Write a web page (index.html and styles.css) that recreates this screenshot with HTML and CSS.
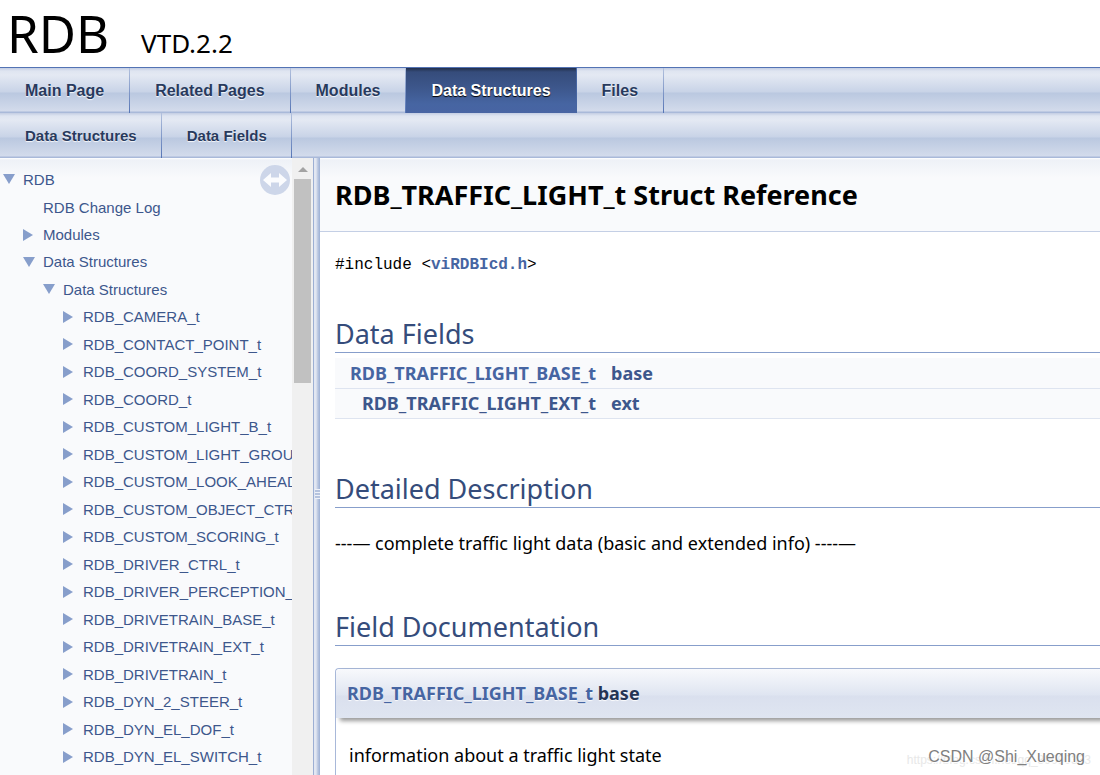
FILE: index.html
```html
<!DOCTYPE html>
<html lang="en">
<head>
<meta charset="utf-8">
<title>RDB: RDB_TRAFFIC_LIGHT_t Struct Reference</title>
<link rel="stylesheet" href="styles.css">
</head>
<body>
<svg class="defs" aria-hidden="true">
  <symbol id="open" viewBox="0 0 12 10"><path d="M0 0H12L6 10Z" fill="#879ecb"/></symbol>
  <symbol id="closed" viewBox="0 0 10 12"><path d="M0 0L10 6L0 12Z" fill="#879ecb"/></symbol>
</svg>
<header class="title-area">
  <span class="project">RDB</span>
  <span class="version">VTD.2.2</span>
</header>
<nav class="tabs" aria-label="Main">
  <a href="#">Main Page</a>
  <a href="#">Related Pages</a>
  <a href="#">Modules</a>
  <a href="#" class="current">Data Structures</a>
  <a href="#">Files</a>
</nav>
<nav class="tabs tabs-sub" aria-label="Data structures">
  <a href="#">Data Structures</a>
  <a href="#">Data Fields</a>
</nav>
<div class="frame">
  <aside class="side">
    <div class="tree-wrap">
      <ul class="tree">
        <li class="l0"><button aria-label="Collapse"><svg class="down"><use href="#open"/></svg></button><a href="#">RDB</a></li>
        <li class="l1"><span class="spacer"></span><a href="#">RDB Change Log</a></li>
        <li class="l1"><button aria-label="Expand"><svg class="right"><use href="#closed"/></svg></button><a href="#">Modules</a></li>
        <li class="l1"><button aria-label="Collapse"><svg class="down"><use href="#open"/></svg></button><a href="#">Data Structures</a></li>
        <li class="l2"><button aria-label="Collapse"><svg class="down"><use href="#open"/></svg></button><a href="#">Data Structures</a></li>
      </ul>
      <ul class="tree tree-structs">
        <li><button aria-label="Expand"><svg class="right"><use href="#closed"/></svg></button><a href="#">RDB_CAMERA_t</a></li>
        <li><button aria-label="Expand"><svg class="right"><use href="#closed"/></svg></button><a href="#">RDB_CONTACT_POINT_t</a></li>
        <li><button aria-label="Expand"><svg class="right"><use href="#closed"/></svg></button><a href="#">RDB_COORD_SYSTEM_t</a></li>
        <li><button aria-label="Expand"><svg class="right"><use href="#closed"/></svg></button><a href="#">RDB_COORD_t</a></li>
        <li><button aria-label="Expand"><svg class="right"><use href="#closed"/></svg></button><a href="#">RDB_CUSTOM_LIGHT_B_t</a></li>
        <li><button aria-label="Expand"><svg class="right"><use href="#closed"/></svg></button><a href="#">RDB_CUSTOM_LIGHT_GROUP_B_t</a></li>
        <li><button aria-label="Expand"><svg class="right"><use href="#closed"/></svg></button><a href="#">RDB_CUSTOM_LOOK_AHEAD_t</a></li>
        <li><button aria-label="Expand"><svg class="right"><use href="#closed"/></svg></button><a href="#">RDB_CUSTOM_OBJECT_CTRL_t</a></li>
        <li><button aria-label="Expand"><svg class="right"><use href="#closed"/></svg></button><a href="#">RDB_CUSTOM_SCORING_t</a></li>
        <li><button aria-label="Expand"><svg class="right"><use href="#closed"/></svg></button><a href="#">RDB_DRIVER_CTRL_t</a></li>
        <li><button aria-label="Expand"><svg class="right"><use href="#closed"/></svg></button><a href="#">RDB_DRIVER_PERCEPTION_t</a></li>
        <li><button aria-label="Expand"><svg class="right"><use href="#closed"/></svg></button><a href="#">RDB_DRIVETRAIN_BASE_t</a></li>
        <li><button aria-label="Expand"><svg class="right"><use href="#closed"/></svg></button><a href="#">RDB_DRIVETRAIN_EXT_t</a></li>
        <li><button aria-label="Expand"><svg class="right"><use href="#closed"/></svg></button><a href="#">RDB_DRIVETRAIN_t</a></li>
        <li><button aria-label="Expand"><svg class="right"><use href="#closed"/></svg></button><a href="#">RDB_DYN_2_STEER_t</a></li>
        <li><button aria-label="Expand"><svg class="right"><use href="#closed"/></svg></button><a href="#">RDB_DYN_EL_DOF_t</a></li>
        <li><button aria-label="Expand"><svg class="right"><use href="#closed"/></svg></button><a href="#">RDB_DYN_EL_SWITCH_t</a></li>
      </ul>
      <button class="sync" aria-label="Toggle panel synchronisation">
        <svg viewBox="0 0 30 30"><circle cx="15" cy="15" r="15" fill="#cdd6e9"/><path d="M3 15L11 8V12.500H19V8L27 15L19 22V17.500H11V22Z" fill="#fbfcfe"/></svg>
      </button>
    </div>
    <div class="scrollbar" aria-hidden="true">
      <svg class="arrow" viewBox="0 0 10 5"><path d="M0 5L5 0L10 5Z" fill="#a3a3a3"/></svg>
      <div class="thumb"></div>
    </div>
    <div class="splitter"><span class="grip"></span></div>
  </aside>
  <main class="doc">
    <div class="doc-header"><h1>RDB_TRAFFIC_LIGHT_t Struct Reference</h1></div>
    <div class="contents">
      <p class="include"><code>#include &lt;<a href="#">viRDBIcd.h</a>&gt;</code></p>
      <h2>Data Fields</h2>
      <table class="members">
        <tr><td class="type"><a href="#">RDB_TRAFFIC_LIGHT_BASE_t</a></td><td><a class="dark" href="#">base</a></td></tr>
        <tr><td class="type"><a class="dark" href="#">RDB_TRAFFIC_LIGHT_EXT_t</a></td><td><a class="dark" href="#">ext</a></td></tr>
      </table>
      <h2>Detailed Description</h2>
      <p class="detail">---&mdash; complete traffic light data (basic and extended info) ----&mdash;</p>
      <h2>Field Documentation</h2>
      <section class="member">
        <h3><a href="#">RDB_TRAFFIC_LIGHT_BASE_t</a> base</h3>
        <div class="member-doc"><p>information about a traffic light state</p></div>
      </section>
    </div>
  </main>
</div>
<div class="source-url">https://blog.csdn.net/qq_39090333</div>
<div class="credit">CSDN @Shi_Xueqing</div>
</body>
</html>
```
FILE: styles.css
```css
* { box-sizing: border-box; }
body {
  margin: 0;
  height: 100vh;
  overflow: hidden;
  display: flex;
  flex-direction: column;
  background: #fff;
  color: #000;
  font-family: "Noto Sans", "Open Sans", sans-serif;
  font-size: 18px;
}
a { color: #4665a2; text-decoration: none; }
h1, h2, h3, p, ul { margin: 0; padding: 0; }
button { border: 0; padding: 0; background: none; cursor: pointer; }
.defs { position: absolute; width: 0; height: 0; }

.title-area {
  display: flex;
  align-items: baseline;
  gap: 32px;
  height: 68px;
  padding-left: 7px;
  border-bottom: 1px solid #5373b4;
  line-height: 66px;
}
.project { font-size: 51px; }
.version { font-size: 26px; }

.tabs {
  display: flex;
  flex: none;
  height: 45px;
  background: linear-gradient(#c3cde3 0, #dfe5f1 3px, #e4e9f3 7px, #c8d3e7 24px, #bac8e0 25px, #d0d9ea 41px, #d3dbec 43px, #a9b9d9 44px);
  font: bold 16px/46px "Liberation Sans", Arial, sans-serif;
}
.tabs a {
  padding: 0 25px;
  border-right: 1px solid;
  border-image: linear-gradient(#b4c2de, #5373b4) 1;
  color: #283a5d;
  text-shadow: 0 1px 1px rgba(255, 255, 255, .9);
}
.tabs-sub { font-size: 15px; }
.tabs-sub a { padding-right: 24px; }
.tabs a.current {
  background: linear-gradient(#222f4b 0, #354c7b 4px, #3d578c 20px, #4665a2 36px, #4864a3);
  border-image: none;
  border-color: #4665a2;
  color: #fff;
  text-shadow: 0 1px 1px #000;
}

.frame { display: flex; flex: 1; min-height: 0; }
.side { display: flex; flex: none; width: 320px; background: #f9fafc; }
.tree-wrap {
  position: relative;
  flex: 1;
  overflow: hidden;
  padding-top: 7px;
  background: linear-gradient(#fff 0, #eef1f7 2px, #f9fafc 20px);
}
.tree {
  list-style: none;
  font: 15px "Liberation Sans", Arial, sans-serif;
  white-space: nowrap;
}
.tree li { display: flex; align-items: center; height: 27px; }
.tree li:nth-child(-n+2), .tree .l2 { height: 28px; }
.tree-structs li:nth-child(n) { height: 27px; padding-left: 60px; }
.tree-structs li:nth-child(even) { height: 28px; }
.tree a { color: #3d578c; }
.tree button, .spacer { flex: none; width: 19px; height: 20px; margin-right: 4px; }
.tree button { display: flex; align-items: center; padding-left: 3px; }
.l1, .l2 { padding-left: 20px; }
.tree .l2 { padding-left: 40px; }
.down { width: 12px; height: 10px; }
.right { width: 10px; height: 12px; }
.sync { position: absolute; top: 7px; right: 2px; width: 30px; height: 30px; }
.sync svg { display: block; width: 30px; height: 30px; }

.scrollbar { width: 21px; padding: 9px 2px 0; background: #f0f0f0; }
.arrow { display: block; width: 10px; height: 5px; margin: 0 auto 7px; }
.thumb { width: 17px; height: 204px; background: #c1c1c1; }
.splitter {
  display: flex;
  align-items: center;
  width: 7px;
  padding: 54px 0 0 2px;
  background: linear-gradient(90deg, #9cafd4 0 1px, #e2e7f2 1px 3px, #c9d3e7 4px, #b8c6e0 5px, #9cafd4);
}
.grip { width: 5px; height: 10px; background: repeating-linear-gradient(#eef1f8 0 1px, #b5c3de 1px 3px); }

.doc { flex: 1; min-width: 0; overflow: hidden; }
.doc-header {
  height: 74px;
  padding: 0 15px;
  border-bottom: 1px solid #c4cfe5;
  background: linear-gradient(#fff 0, #eef1f7 2px, #f9fafc 20px);
}
h1 { font-size: 27px; line-height: 74px; white-space: nowrap; }
.contents { padding-left: 15px; white-space: nowrap; }
.include { padding-top: 17px; line-height: 26px; }
.include code { font: 16px/26px "Liberation Mono", monospace; }
.include a { font-weight: bold; }
h2 {
  margin-top: 34px;
  height: 41px;
  border-bottom: 1px solid #879ecb;
  color: #354c7b;
  font-size: 27px;
  font-weight: normal;
  line-height: 44px;
}
.members { width: 100%; margin: 5px 0 48px; border-collapse: collapse; font-weight: bold; }
.members td { height: 30px; padding: 0 7px; border-bottom: 1px solid #dee4f0; background: #f9fafc; line-height: 28px; }
.members .type { width: 269px; padding-right: 8px; text-align: right; }
.dark { color: #3d578c; }
.detail { padding: 21px 0 14px; line-height: 28px; }
.member {
  margin-top: 22px;
  border: 1px solid #a8b8d9;
  border-width: 1px 0 0 1px;
  border-radius: 4px 0 0 0;
}
h3 {
  height: 49px;
  padding-left: 11px;
  border-radius: 4px 0 0 0;
  background: linear-gradient(#f8f9fc 0, #dfe5f1 26px, #dae0ee 27px, #dfe5f1);
  box-shadow: 4px 3px 4px rgba(0, 0, 0, .4);
  color: #253555;
  font-size: 18px;
  line-height: 49px;
  text-shadow: 0 1px 1px rgba(255, 255, 255, .9);
}
.member-doc { padding: 23px 13px; line-height: 28px; }

.source-url, .credit { position: absolute; font-family: "Liberation Sans", Arial, sans-serif; white-space: nowrap; }
.source-url { right: 9px; bottom: 8px; color: #e8e8e8; font-size: 12px; }
.credit { right: 15px; bottom: 9px; color: #808080; font-size: 16px; text-shadow: 1px 1px 1px #fff; }
```
